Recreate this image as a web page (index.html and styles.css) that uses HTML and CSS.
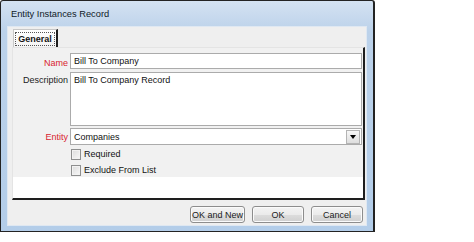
FILE: index.html
```html
<!DOCTYPE html>
<html>
<head>
<meta charset="utf-8">
<link rel="stylesheet" href="styles.css">
</head>
<body>
<div class="window">
  <div class="titlebar">Entity Instances Record</div>
  <div class="client">
    <div class="tabs">
      <div class="tab"><span class="tab-label">General</span></div>
    </div>
    <div class="panel">
      <div class="form">
        <label class="lbl req">Name</label>
        <div class="input name">Bill To Company</div>
        <label class="lbl top">Description</label>
        <div class="input textarea">Bill To Company Record</div>
        <label class="lbl req">Entity</label>
        <div class="input select"><span class="sel-text">Companies</span><span class="drop"><span class="tri"></span></span></div>
        <span></span>
        <div class="check"><span class="cb"></span>Required</div>
        <span></span>
        <div class="check last"><span class="cb"></span>Exclude From List</div>
      </div>
    </div>
    <div class="buttons">
      <div class="btn wide">OK and New</div>
      <div class="btn">OK</div>
      <div class="btn">Cancel</div>
    </div>
  </div>
</div>
</body>
</html>
```

FILE: styles.css
```css
html, body {
  margin: 0;
  padding: 0;
  background: #ffffff;
}
body {
  font-family: "Liberation Sans", Arial, sans-serif;
  font-size: 9px;
  color: #111111;
}
.window {
  box-sizing: border-box;
  width: 375px;
  height: 232px;
  border: 1px solid #232323;
  border-right-width: 2px;
  border-radius: 3px 3px 0 0;
  background: linear-gradient(to bottom, #d4e2f2 0px, #bcd2ea 30px, #b3cde9 100%);
  padding: 0 6px 5px 6px;
  display: flex;
  flex-direction: column;
}
.titlebar {
  height: 25px;
  display: flex;
  align-items: center;
  padding-left: 4px;
  font-size: 9.3px;
  color: #0f1a28;
}
.client {
  flex: 1;
  background: #efefef;
  border: 1px solid #dfe8f2;
  display: flex;
  flex-direction: column;
  padding: 2px 1px 0 4px;
}
.tabs {
  height: 18px;
  display: flex;
  align-items: flex-end;
}
.tab {
  box-sizing: border-box;
  width: 45px;
  height: 18px;
  margin-left: 1px;
  background: linear-gradient(#ffffff, #f4f4f4);
  border: 1px solid #c8c8c8;
  border-right: 2px solid #1e1e1e;
  border-bottom: none;
  display: flex;
  align-items: center;
  justify-content: center;
}
.tab-label {
  font-weight: bold;
  font-size: 9px;
  padding: 1px 2px;
  outline: 1px dotted #555;
  outline-offset: 0;
}
.panel {
  box-sizing: border-box;
  height: 153px;
  background: #ffffff;
  border-top: 1px solid #e4e4e4;
  border-left: 1px solid #e4e4e4;
  border-right: 2px solid #1e1e1e;
  border-bottom: 2px solid #1e1e1e;
}
.form {
  background: #f1f1f1;
  display: grid;
  grid-template-columns: 55px 292px;
  column-gap: 2px;
  padding: 5px 0 0 0;
  align-items: center;
}
.lbl {
  text-align: right;
  color: #222222;
}
.lbl.req {
  color: #d8232f;
}
.lbl.top {
  align-self: start;
  padding-top: 3px;
}
.input {
  box-sizing: border-box;
  height: 16px;
  background: #ffffff;
  border: 1px solid #ababab;
  padding: 0 3px;
  display: flex;
  align-items: center;
}
.input.name {
  margin-bottom: 3px;
}
.textarea {
  height: 54px;
  align-items: flex-start;
  padding-top: 2px;
  margin-bottom: 2px;
}
.select {
  height: 17px;
  padding-right: 1px;
  justify-content: space-between;
  margin-bottom: 1px;
}
.drop {
  box-sizing: border-box;
  width: 14px;
  height: 14px;
  background: linear-gradient(#f7f7f7, #dedede);
  border: 1px solid #b4b4b4;
  display: flex;
  align-items: center;
  justify-content: center;
}
.tri {
  width: 0;
  height: 0;
  border-left: 3.5px solid transparent;
  border-right: 3.5px solid transparent;
  border-top: 4px solid #000;
}
.check {
  height: 16px;
  display: flex;
  align-items: center;
  gap: 3px;
  padding-left: 1px;
}
.check.last {
  height: 15px;
  align-items: flex-start;
  padding-top: 3px;
  box-sizing: border-box;
}
.cb {
  box-sizing: border-box;
  width: 10px;
  height: 11px;
  border: 1px solid #8e8f8f;
  background: linear-gradient(135deg, #dcdcdc, #f8f8f8);
  box-shadow: inset 0 0 0 1px #f2f2f2;
}
.buttons {
  display: flex;
  justify-content: flex-end;
  gap: 7px;
  padding: 6px 2px 0 0;
}
.btn {
  box-sizing: border-box;
  width: 52px;
  height: 17px;
  border: 1px solid #8d8d8d;
  border-radius: 3px;
  background: linear-gradient(#f4f4f4 0%, #ebebeb 50%, #dddddd 51%, #cfcfcf 100%);
  box-shadow: inset 0 0 0 1px #fbfbfb;
  display: flex;
  align-items: center;
  justify-content: center;
  color: #1a1a1a;
}
.btn.wide {
  width: 55px;
}
```
